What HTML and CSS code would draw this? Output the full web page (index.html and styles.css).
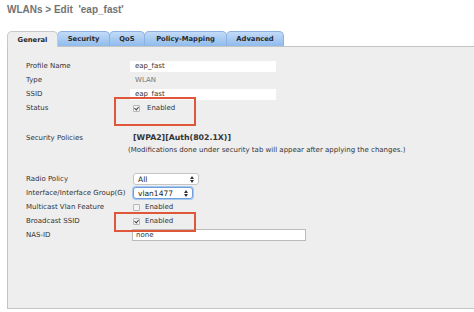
FILE: index.html
```html
<!DOCTYPE html>
<html lang="en">
<head>
  <meta charset="UTF-8" />
  <title>WLANs &gt; Edit</title>
  <link rel="stylesheet" href="styles.css">
</head>
<body>

  <h1 class="crumb">WLANs &gt; Edit&nbsp;&nbsp;'eap_fast'</h1>

  <div class="tabs">
    <span class="tab active" style="width:51px">General</span>
    <span class="tab" style="width:53px">Security</span>
    <span class="tab" style="width:36px">QoS</span>
    <span class="tab" style="width:83px">Policy-Mapping</span>
    <span class="tab" style="width:58px">Advanced</span>
  </div>

  <div class="panel">
    <div class="row">
      <span class="lbl">Profile Name</span>
      <span class="val"><input class="txt" type="text" value="eap_fast"></span>
    </div>
    <div class="row">
      <span class="lbl">Type</span>
      <span class="val plain">WLAN</span>
    </div>
    <div class="row">
      <span class="lbl">SSID</span>
      <span class="val"><input class="txt" type="text" value="eap_fast"></span>
    </div>
    <div class="row">
      <span class="lbl">Status</span>
      <span class="val mark mark-big">
        <input class="chk" type="checkbox" checked> <span class="chk-lbl wide">Enabled</span>
      </span>
    </div>

    <div class="row tall gap-a">
      <span class="lbl">Security Policies</span>
      <span class="val stack">
        <span class="policy">[WPA2][Auth(802.1X)]</span>
        <span class="note">(Modifications done under security tab will appear after applying the changes.)</span>
      </span>
    </div>

    <div class="row gap-b">
      <span class="lbl">Radio Policy</span>
      <span class="val">
        <span class="sel" style="width:66px">All
          <svg class="arrows" width="4" height="7" viewBox="0 0 4 7"><path d="M0 3 L2 0 L4 3 Z M0 4 L2 7 L4 4 Z" fill="#333"/></svg>
        </span>
      </span>
    </div>
    <div class="row">
      <span class="lbl">Interface/Interface Group(G)</span>
      <span class="val">
        <span class="sel focus" style="width:60px">vlan1477
          <svg class="arrows" width="4" height="7" viewBox="0 0 4 7"><path d="M0 3 L2 0 L4 3 Z M0 4 L2 7 L4 4 Z" fill="#333"/></svg>
        </span>
      </span>
    </div>
    <div class="row">
      <span class="lbl">Multicast Vlan Feature</span>
      <span class="val">
        <input class="chk" type="checkbox"> <span class="chk-lbl">Enabled</span>
      </span>
    </div>
    <div class="row">
      <span class="lbl">Broadcast SSID</span>
      <span class="val mark mark-small">
        <input class="chk" type="checkbox" checked> <span class="chk-lbl">Enabled</span>
      </span>
    </div>
    <div class="row">
      <span class="lbl">NAS-ID</span>
      <span class="val"><input class="txt boxed" type="text" value="none"></span>
    </div>
  </div>

</body>
</html>
```

FILE: styles.css
```css
* { box-sizing: border-box; margin: 0; padding: 0 }
html, body {
  width: 100%; height: 100%;
  background: #fff;
  overflow: hidden;
  font-family: 'DejaVu Sans', Verdana, sans-serif;
  font-size: 7px;
  color: #333;
}

/*–––– Breadcrumb ––––*/
.crumb {
  padding: 4px 0 0 7px;
  font-family: 'Liberation Sans', Arial, sans-serif;
  font-size: 10px;
  line-height: 12px;
  font-weight: bold;
  color: #737373;
}

/*–––– Tabs ––––*/
.tabs {
  display: flex;
  margin: 15px 0 0 7px;
  height: 15px;
}
.tab {
  display: flex; align-items: center; justify-content: center;
  font-size: 6.8px;
  font-weight: bold;
  color: #2b2b2b;
  background: linear-gradient(#c3dbf7, #8fbbec);
  border: 1px solid #8db2df;
  border-bottom: none;
  border-radius: 5px 5px 0 0;
  margin-right: -1px;
}
.tab.active {
  background: #eee;
  border-color: #c9c9c9;
  position: relative; z-index: 1;
  height: 16px;
}

/*–––– Panel ––––*/
.panel {
  margin-left: 7px;
  height: 263px;
  background: #eee;
  border: 1px solid #c4c4c4;
  border-right: none;
  padding: 12px 0 0 18px;
}

.row {
  display: flex;
  align-items: center;
  height: 14px;
}
.row.tall {
  height: 25px;
  align-items: flex-start;
  line-height: 12px;
}
.gap-a { margin-top: 17px; }
.gap-b { margin-top: 15px; }

.lbl { width: 104px; flex: none; }
.val {
  display: flex; align-items: center;
  height: 14px;
}
.val.plain { padding-left: 5px; color: #777; }

.txt {
  width: 146px; height: 11px;
  border: none;
  background: #fff;
  font: inherit;
  color: #333;
  padding-left: 5px;
  outline: none;
}
.txt.boxed {
  width: 174px; height: 12px;
  margin-left: 2px;
  border: 1px solid #bbb;
  padding-left: 3px;
}

/* checkbox */
.chk {
  appearance: none;
  width: 7px; height: 7px;
  margin-left: 3px;
  background: #f4f4f4;
  border: 1px solid #b7b7b7;
  border-radius: 1px;
  position: relative;
}
.chk:checked::after {
  content: '';
  position: absolute; left: 1px; top: 0;
  width: 2px; height: 3px;
  border: solid #444;
  border-width: 0 1px 1px 0;
  transform: rotate(40deg);
}
.chk-lbl { margin-left: 5px; }
.chk-lbl.wide { margin-left: 7px; }

/* policy text */
.val.stack {
  flex-direction: column; align-items: flex-start;
  height: auto;
  line-height: 12px;
}
.policy { font-weight: bold; padding-left: 3px; font-size: 7.8px; }
.note { margin-left: -2px; white-space: nowrap; }

/* select */
.sel {
  position: relative;
  display: flex; align-items: center;
  margin-left: 3px;
  height: 12px;
  padding-left: 4px;
  font-size: 7.5px;
  color: #222;
  background: #fff;
  border: 1px solid #c6c6c6;
  border-radius: 3px;
}
.sel.focus {
  border-color: #6e9fdc;
  box-shadow: 0 0 0 1px #a9c8f0;
}
.arrows {
  position: absolute; right: 4px; top: 2px;
}

/*–––– Annotation boxes ––––*/
.mark { position: relative; }
.mark::after {
  content: '';
  position: absolute;
  left: -16px; width: 78px;
  border: 2px solid #e0563b;
  pointer-events: none;
}
.mark-big::after { top: -4px; height: 25px; }
.mark-small::after { top: -2px; height: 16px; }
```
